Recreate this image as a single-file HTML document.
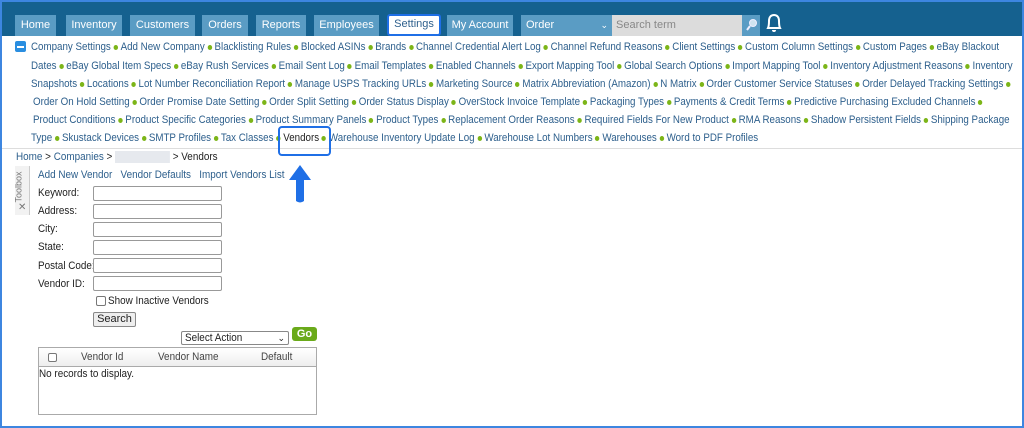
<!DOCTYPE html>
<html><head><style>
*{margin:0;padding:0;box-sizing:border-box}
body{width:1024px;height:428px;overflow:hidden;background:#fff;font-family:"Liberation Sans",Arial,sans-serif;font-size:11px;color:#222;position:relative}
.frame{position:absolute;left:0;top:0;width:1024px;height:428px;border:2px solid #3d86e0;pointer-events:none;z-index:10}
.hdr{position:absolute;left:0;top:0;width:1024px;height:36px;background:#15618f}
.tab{position:absolute;top:15px;height:21px;background:#5a9cc4;color:#fff;font-size:11px;line-height:21px;text-align:center;white-space:nowrap}
.links{position:absolute;left:0;top:36px;width:1024px;height:112px;background:#fff}
.ln{position:absolute;white-space:nowrap;color:#2d5f8c;font-size:11px;line-height:14px;transform:scaleX(0.888);transform-origin:0 0}
.sx{transform:scaleX(0.9);transform-origin:0 0;white-space:nowrap}
.d{display:inline-block;width:5px;height:5px;border-radius:50%;background:#7cb518;vertical-align:middle;margin:0 3px 0 3px}
.sep{position:absolute;left:2px;top:148px;width:1020px;height:1px;background:#ddd}
.lbl{position:absolute;left:38px;font-size:11px;color:#222;transform:scaleX(0.9);transform-origin:0 0;white-space:nowrap}
.inp{position:absolute;left:93px;width:129px;height:15px;border:1px solid #999;border-radius:2px;background:#fff}
a{color:#2d5f8c;text-decoration:none}
</style></head><body>
<div class="hdr"></div>
<div class="tab" style="left:15px;width:41px">Home</div>
<div class="tab" style="left:66px;width:56px">Inventory</div>
<div class="tab" style="left:130px;width:65px">Customers</div>
<div class="tab" style="left:202px;width:46px">Orders</div>
<div class="tab" style="left:256px;width:50px">Reports</div>
<div class="tab" style="left:314px;width:65px">Employees</div>
<div class="tab" style="left:387px;width:54px;background:#fff;color:#2d5f8c;border:2px solid #1f6fe6;border-radius:3px;line-height:17px;top:14px;height:22px">Settings</div>
<div class="tab" style="left:447px;width:66px">My Account</div>
<div class="tab" style="left:521px;width:91px;text-align:left;padding-left:5px">Order<span style="position:absolute;right:4px;font-size:9px">&#8964;</span></div>
<div class="tab" style="left:612px;width:130px;background:#dcdcdc;color:#888;text-align:left;padding-left:4px">Search term</div>
<div class="tab" style="left:742px;width:18px"></div>
<svg style="position:absolute;left:745px;top:18px" width="13" height="14"><circle cx="8" cy="5" r="3.5" fill="#cfe3f0" stroke="#eef" /><line x1="5" y1="8" x2="2" y2="12" stroke="#eef" stroke-width="2"/></svg>
<svg style="position:absolute;left:764px;top:12px" width="20" height="22"><path d="M4 16 C5 14 5 12 5 9 C5 5 7 3 10 3 C13 3 15 5 15 9 C15 12 15 14 16 16 Z" fill="none" stroke="#fff" stroke-width="2"/><path d="M8 18 a2 2 0 0 0 4 0" fill="#fff"/></svg>

<div class="links">
<div style="position:absolute;left:15px;top:5px;width:11px;height:11px;background:#2a8ee0;border-radius:2px"><div style="position:absolute;left:2px;top:5px;width:7px;height:2px;background:#fff"></div></div>
<div class="ln" style="left:31px;top:4px">Company Settings<span class="d"></span>Add New Company<span class="d"></span>Blacklisting Rules<span class="d"></span>Blocked ASINs<span class="d"></span>Brands<span class="d"></span>Channel Credential Alert Log<span class="d"></span>Channel Refund Reasons<span class="d"></span>Client Settings<span class="d"></span>Custom Column Settings<span class="d"></span>Custom Pages<span class="d"></span>eBay Blackout</div>
<div class="ln" style="left:31px;top:23px">Dates<span class="d"></span>eBay Global Item Specs<span class="d"></span>eBay Rush Services<span class="d"></span>Email Sent Log<span class="d"></span>Email Templates<span class="d"></span>Enabled Channels<span class="d"></span>Export Mapping Tool<span class="d"></span>Global Search Options<span class="d"></span>Import Mapping Tool<span class="d"></span>Inventory Adjustment Reasons<span class="d"></span>Inventory</div>
<div class="ln" style="left:31px;top:41px">Snapshots<span class="d"></span>Locations<span class="d"></span>Lot Number Reconciliation Report<span class="d"></span>Manage USPS Tracking URLs<span class="d"></span>Marketing Source<span class="d"></span>Matrix Abbreviation (Amazon)<span class="d"></span>N Matrix<span class="d"></span>Order Customer Service Statuses<span class="d"></span>Order Delayed Tracking Settings<span class="d"></span></div>
<div class="ln" style="left:33px;top:59px">Order On Hold Setting<span class="d"></span>Order Promise Date Setting<span class="d"></span>Order Split Setting<span class="d"></span>Order Status Display<span class="d"></span>OverStock Invoice Template<span class="d"></span>Packaging Types<span class="d"></span>Payments &amp; Credit Terms<span class="d"></span>Predictive Purchasing Excluded Channels<span class="d"></span></div>
<div class="ln" style="left:33px;top:77px">Product Conditions<span class="d"></span>Product Specific Categories<span class="d"></span>Product Summary Panels<span class="d"></span>Product Types<span class="d"></span>Replacement Order Reasons<span class="d"></span>Required Fields For New Product<span class="d"></span>RMA Reasons<span class="d"></span>Shadow Persistent Fields<span class="d"></span>Shipping Package</div>
<div class="ln" style="left:31px;top:95px">Type<span class="d"></span>Skustack Devices<span class="d"></span>SMTP Profiles<span class="d"></span>Tax Classes<span class="d"></span><span style="color:#222">Vendors</span><span class="d"></span>Warehouse Inventory Update Log<span class="d"></span>Warehouse Lot Numbers<span class="d"></span>Warehouses<span class="d"></span>Word to PDF Profiles</div>
</div>
<div style="position:absolute;left:278px;top:126px;width:53px;height:30px;border:2px solid #1f6fe6;border-radius:4px;z-index:5"></div>
<div class="sep"></div>
<svg style="position:absolute;left:288px;top:163px" width="24" height="42"><path d="M12 2 L23 17 L16 17 L16 38 Q12 41 8 38 L8 17 L1 17 Z" fill="#1f6fe6"/></svg>

<div class="sx" style="position:absolute;left:16px;top:151px"><a>Home</a> &gt; <a>Companies</a> &gt; <span style="display:inline-block;width:61px;height:12px;background:#e6e9ee;vertical-align:middle"></span> &gt; Vendors</div>
<div style="position:absolute;left:15px;top:166px;width:15px;height:49px;background:#f2f2f2;border-right:1px solid #ccc"><div style="position:absolute;left:-12px;top:16px;transform:rotate(-90deg);font-size:9px;color:#777;white-space:nowrap">Toolbox</div><div style="position:absolute;left:3px;top:36px;font-size:10px;color:#777">✕</div></div>
<div class="sx" style="position:absolute;left:38px;top:169px"><a>Add New Vendor</a>&nbsp;&nbsp; <a>Vendor Defaults</a>&nbsp;&nbsp; <a>Import Vendors List</a></div>
<div class="lbl" style="top:187px">Keyword:</div><div class="inp" style="top:186px"></div>
<div class="lbl" style="top:205px">Address:</div><div class="inp" style="top:204px"></div>
<div class="lbl" style="top:223px">City:</div><div class="inp" style="top:222px"></div>
<div class="lbl" style="top:241px">State:</div><div class="inp" style="top:240px"></div>
<div class="lbl" style="top:260px">Postal Code:</div><div class="inp" style="top:258px"></div>
<div class="lbl" style="top:278px">Vendor ID:</div><div class="inp" style="top:276px"></div>
<div style="position:absolute;left:96px;top:296px;width:10px;height:10px;border:1px solid #777;border-radius:2px"></div>
<div class="sx" style="position:absolute;left:108px;top:295px">Show Inactive Vendors</div>
<div style="position:absolute;left:93px;top:312px;width:43px;height:15px;border:1px solid #888;border-radius:2px;background:#eee;text-align:center;line-height:13px">Search</div>
<div style="position:absolute;left:181px;top:331px;width:108px;height:14px;border:1px solid #888;border-radius:2px;padding-left:3px;line-height:12px"><span class="sx" style="display:inline-block">Select Action</span><span style="position:absolute;right:3px;font-size:9px">&#8964;</span></div>
<div style="position:absolute;left:292px;top:327px;width:25px;height:14px;background:#6aaa1a;border-radius:3px;color:#fff;font-weight:bold;text-align:center;line-height:14px;font-size:11px">Go</div>
<div style="position:absolute;left:38px;top:347px;width:279px;height:68px;border:1px solid #aaa">
<div style="height:19px;background:linear-gradient(#fff,#eee);border-bottom:1px solid #aaa;position:relative;color:#444">
<div style="position:absolute;left:9px;top:5px;width:9px;height:9px;border:1px solid #777;border-radius:2px;background:#fff"></div>
<span class="sx" style="position:absolute;left:42px;top:3px">Vendor Id</span><span class="sx" style="position:absolute;left:119px;top:3px">Vendor Name</span><span class="sx" style="position:absolute;left:222px;top:3px">Default</span></div>
<div class="sx" style="padding-top:1px">No records to display.</div></div>
<div class="frame"></div>
</body></html>
